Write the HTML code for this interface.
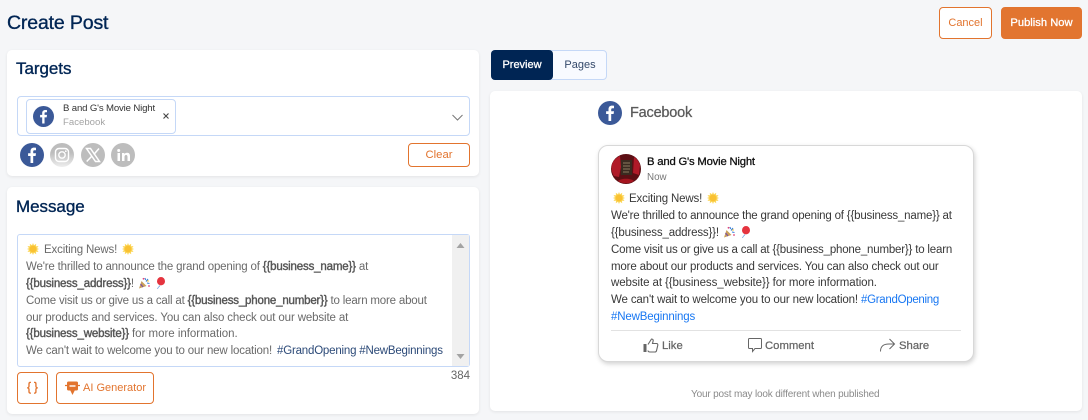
<!DOCTYPE html>
<html><head><meta charset="utf-8">
<style>
html,body{margin:0;padding:0}
body{width:1088px;height:420px;overflow:hidden;position:relative;background:#f5f6f8;font-family:"Liberation Sans",sans-serif}
.a{position:absolute;white-space:nowrap}
.card{position:absolute;background:#fff;border-radius:5px;box-shadow:0 1px 3px rgba(0,0,0,.08)}
.h{color:#002554;-webkit-text-stroke:.35px #002554;font-size:17px;line-height:22px;letter-spacing:-.05px}
.btn{position:absolute;box-sizing:border-box;border:1px solid #e2742e;border-radius:4px;background:#fff;color:#e2742e;font-size:11.5px;display:flex;align-items:center;justify-content:center}
.l{position:absolute;white-space:nowrap;font-size:11.5px;line-height:16px;height:16px;letter-spacing:-.16px}
.m{color:#6a6a6a}
.p{color:#383838}
b{font-weight:normal;-webkit-text-stroke:.4px #555;color:#555}
.tag{color:#2c4a78}
.blue{color:#1877f2}
svg{position:absolute;overflow:visible}
.act{position:absolute;font-size:11.3px;color:#666;-webkit-text-stroke:.25px #666;line-height:16px}
</style></head>
<body>
<svg width="0" height="0" style="position:absolute">
<defs>
<symbol id="fb" viewBox="0 0 24 24"><circle cx="12" cy="12" r="12" fill="#3b5998"/><path d="M13.2 20v-7h2.4l.4-2.8h-2.8V8.500c0-.8.3-1.300 1.400-1.300H16V4.700c-.3 0-1.100-.1-2-.1-2.100 0-3.500 1.300-3.500 3.600v2H8.100V13h2.400v7z" fill="#fff"/></symbol>
<symbol id="star" viewBox="0 0 12 12"><path d="M6 0l1 2.300L9.200.8l-.2 2.400 2.500-.1-1.500 2L12 6l-2 .9 1.500 2-2.500-.1.200 2.400L7 9.700 6 12l-1-2.300-2.200 1.500.2-2.400-2.500.1 1.500-2L0 6l2-.9-1.500-2 2.500.1L2.800.8 5 2.300z" fill="#fcd658"/><circle cx="6" cy="6" r="3.400" fill="#f9c132"/></symbol>
<symbol id="pop" viewBox="0 0 12 12"><path d="M1 11.500L3.500 4l5 5z" fill="#c9a05a"/><path d="M2.500 7l2.500 3" stroke="#7b4fa0" stroke-width="1.200"/><path d="M7 1l.6 2M10 2L8 4.500M11.500 6.500L9 6" stroke="#3b82d8" stroke-width="1.100"/><circle cx="5.500" cy="1.800" r=".9" fill="#e0457b"/><circle cx="11" cy="9" r=".9" fill="#e0457b"/><circle cx="10" cy="4" r=".7" fill="#f4b400"/></symbol>
<symbol id="bal" viewBox="0 0 12 12"><ellipse cx="7" cy="4.200" rx="4" ry="4.200" fill="#e5343f"/><path d="M6 8.500C5 10 4 10 3.500 12" fill="none" stroke="#6f9fe0" stroke-width=".8"/></symbol>
</defs>
</svg>

<div class="a" style="left:7px;top:10px;font-size:19.500px;letter-spacing:-.15px;line-height:26px;color:#002554;-webkit-text-stroke:.35px #002554">Create Post</div>
<div class="btn" style="left:939px;top:7px;width:53px;height:32px;font-size:11px">Cancel</div>
<div class="btn" style="left:1001px;top:7px;width:81px;height:32px;background:#e27530;color:#fff;font-size:11.200px;-webkit-text-stroke:.3px #fff">Publish Now</div>

<!-- Targets -->
<div class="card" style="left:7px;top:50px;width:472px;height:126px"></div>
<div class="a h" style="left:16px;top:58px">Targets</div>
<div class="a" style="left:17px;top:96px;width:453px;height:40px;box-sizing:border-box;border:1px solid #c5d8f7;border-radius:4px"></div>
<div class="a" style="left:26px;top:99px;width:150px;height:35px;box-sizing:border-box;border:1px solid #c5d8f7;border-radius:4px"></div>
<svg style="left:33px;top:106px" width="21" height="21"><use href="#fb" width="21" height="21"/></svg>
<div class="a" style="left:63px;top:103px;font-size:9.600px;letter-spacing:-.15px;line-height:12px;color:#333">B and G's Movie Night</div>
<div class="a" style="left:63px;top:117px;font-size:9.600px;line-height:12px;color:#a5a5a5">Facebook</div>
<svg style="left:163px;top:113px" width="6" height="6"><path d="M.5.500l5 5M5.500.500l-5 5" stroke="#444" stroke-width="1.100"/></svg>
<svg style="left:452px;top:114px" width="11" height="7"><path d="M.5 1l5 5 5-5" fill="none" stroke="#777" stroke-width="1"/></svg>
<svg style="left:20px;top:143px" width="24" height="24"><use href="#fb" width="24" height="24"/></svg>
<svg style="left:50px;top:143px" width="24" height="24" viewBox="0 0 24 24"><defs><linearGradient id="g" x1="0" y1="0" x2="0" y2="1"><stop offset=".4" stop-color="#bdbdbd"/><stop offset="1" stop-color="#eeeeee"/></linearGradient></defs><circle cx="12" cy="12" r="12" fill="url(#g)"/><rect x="5.500" y="5.500" width="13" height="13" rx="3.500" fill="none" stroke="#fff" stroke-width="1.400"/><circle cx="12" cy="12" r="3.200" fill="none" stroke="#fff" stroke-width="1.400"/><circle cx="15.800" cy="8.200" r=".9" fill="#fff"/></svg>
<svg style="left:81px;top:143px" width="24" height="24" viewBox="0 0 24 24"><circle cx="12" cy="12" r="12" fill="#bdbdbd"/><path d="M5.500 5.500h4l9 13h-4z" fill="none" stroke="#fff" stroke-width="1.500"/><path d="M18 5.500l-5.200 6M11 13l-5.300 5.500" stroke="#fff" stroke-width="1.500"/></svg>
<svg style="left:111px;top:143px" width="24" height="24" viewBox="0 0 24 24"><circle cx="12" cy="12" r="12" fill="#bdbdbd"/><rect x="6.500" y="10" width="2.500" height="8" fill="#fff"/><circle cx="7.700" cy="7.500" r="1.500" fill="#fff"/><path d="M11 10h2.400v1.200c.5-.8 1.400-1.400 2.600-1.400 2.300 0 3 1.400 3 3.600V18h-2.500v-4c0-1.100-.3-2-1.400-2-1.200 0-1.600.9-1.600 2v4H11z" fill="#fff"/></svg>
<div class="btn" style="left:408px;top:143px;width:62px;height:24px;font-size:11.300px">Clear</div>

<!-- Message -->
<div class="card" style="left:7px;top:187px;width:472px;height:227px"></div>
<div class="a h" style="left:16px;top:196px">Message</div>
<div class="a" style="left:17px;top:234px;width:453px;height:133px;box-sizing:border-box;border:1px solid #c5d8f7;border-radius:3px"></div>
<div class="a" style="left:452px;top:235px;width:17px;height:131px;background:#f0f0f0"></div>
<svg style="left:456px;top:243px" width="9" height="6"><path d="M4.500 0l4 5h-8z" fill="#a3a3a3"/></svg>
<svg style="left:456px;top:354px" width="9" height="6"><path d="M.5 0h8l-4 5z" fill="#a3a3a3"/></svg>

<svg style="left:27px;top:243px" width="12" height="12"><use href="#star" width="12" height="12"/></svg>
<div class="l m" style="left:44px;top:242px">Exciting News!</div>
<svg style="left:122px;top:243px" width="12" height="12"><use href="#star" width="12" height="12"/></svg>
<div class="l m" style="left:26px;top:259px;letter-spacing:-.17px">We're thrilled to announce the grand opening of <b>{{business_name}}</b> at</div>
<div class="l m" style="left:26px;top:276px"><b>{{business_address}}</b>!</div>
<svg style="left:138px;top:277px" width="12" height="12"><use href="#pop" width="12" height="12"/></svg>
<svg style="left:154px;top:277px" width="12" height="12"><use href="#bal" width="12" height="12"/></svg>
<div class="l m" style="left:26px;top:293px;letter-spacing:-.185px">Come visit us or give us a call at <b>{{business_phone_number}}</b> to learn more about</div>
<div class="l m" style="left:26px;top:310px;letter-spacing:-.13px">our products and services. You can also check out our website at</div>
<div class="l m" style="left:26px;top:326px"><b>{{business_website}}</b> <span style="letter-spacing:-.02px">for more information.</span></div>
<div class="l m" style="left:26px;top:343px">We can't wait to welcome you to our new location! <span class="tag" style="letter-spacing:-.2px;margin-left:2px">#GrandOpening #NewBeginnings</span></div>
<div class="a" style="right:618px;top:369px;font-size:11.500px;line-height:14px;color:#666">384</div>

<div class="btn" style="left:17px;top:372px;width:31px;height:32px;font-size:11.500px;-webkit-text-stroke:.4px #e2742e;letter-spacing:3px;padding-left:3px">{}</div>
<div class="btn" style="left:56px;top:372px;width:98px;height:32px;justify-content:flex-start;padding-left:26px;font-size:11px">AI Generator</div>
<svg style="left:65px;top:381px" width="15" height="14" viewBox="0 0 15 14"><rect x="2" y=".5" width="11" height="9" rx="1.500" fill="#e2742e"/><path d="M0 4.500h15M6 9.500l1.500 3 1.500-3z" stroke="#e2742e" stroke-width="1.300" fill="#e2742e"/><path d="M4.500 5h6" stroke="#fff" stroke-width="1.400"/></svg>

<!-- Right -->
<div class="a" style="left:491px;top:50px;width:116px;height:30px;box-sizing:border-box;border:1px solid #c5d8f7;border-radius:4px;background:#f8faff"></div>
<div class="a" style="left:491px;top:50px;width:62px;height:30px;border-radius:4px;background:#002554;color:#fff;font-size:11px;line-height:30px;text-align:center;-webkit-text-stroke:.3px #fff">Preview</div>
<div class="a" style="left:553px;top:50px;width:54px;height:30px;color:#34496b;font-size:11px;line-height:30px;text-align:center">Pages</div>

<div class="card" style="left:490px;top:91px;width:592px;height:320px"></div>
<svg style="left:598px;top:101px" width="24" height="24"><use href="#fb" width="24" height="24"/></svg>
<div class="a" style="left:630px;top:103px;font-size:14.500px;letter-spacing:-.2px;line-height:20px;color:#5a5a5a;-webkit-text-stroke:.25px #5a5a5a">Facebook</div>

<div class="a" style="left:598px;top:145px;width:376px;height:217px;box-sizing:border-box;border:1px solid #d8d8d8;border-radius:10px;background:#fff;box-shadow:1px 2px 5px rgba(0,0,0,.18)"></div>
<svg style="left:611px;top:154px" width="30" height="30" viewBox="0 0 30 30"><circle cx="15" cy="15" r="15" fill="#5c0f14"/><path d="M1 10a15 15 0 0 1 8-8l1 11-2 10-5-1a15 15 0 0 1-2-12zM23 3a15 15 0 0 1 6 8l-1 10-6-2z" fill="#b01a28"/><rect x="10" y="6" width="11" height="15" fill="#3a2a20"/><path d="M12 9h7M12 12h7M12 15h7M12 18h6" stroke="#8d7a5f" stroke-width="1"/><path d="M7 27c3-3 13-3 16 0a15 15 0 0 1-16 0z" fill="#a5151f"/></svg>
<div class="a" style="left:647px;top:155px;font-size:11.300px;letter-spacing:-.2px;line-height:15px;color:#111;-webkit-text-stroke:.3px #111">B and G's Movie Night</div>
<div class="a" style="left:647px;top:172px;font-size:9.800px;line-height:12px;color:#777">Now</div>

<svg style="left:613px;top:192px" width="12" height="12"><use href="#star" width="12" height="12"/></svg>
<div class="l p" style="left:629px;top:191px">Exciting News!</div>
<svg style="left:707px;top:192px" width="12" height="12"><use href="#star" width="12" height="12"/></svg>
<div class="l p" style="left:611px;top:208px;letter-spacing:-.19px">We're thrilled to announce the grand opening of {{business_name}} at</div>
<div class="l p" style="left:611px;top:225px">{{business_address}}!</div>
<svg style="left:723px;top:226px" width="12" height="12"><use href="#pop" width="12" height="12"/></svg>
<svg style="left:739px;top:226px" width="12" height="12"><use href="#bal" width="12" height="12"/></svg>
<div class="l p" style="left:611px;top:242px;letter-spacing:-.19px">Come visit us or give us a call at {{business_phone_number}} to learn</div>
<div class="l p" style="left:611px;top:259px;letter-spacing:-.145px">more about our products and services. You can also check out our</div>
<div class="l p" style="left:611px;top:275px;letter-spacing:-.085px">website at {{business_website}} for more information.</div>
<div class="l p" style="left:611px;top:292px;letter-spacing:-.14px">We can't wait to welcome you to our new location! <span class="blue" style="letter-spacing:-.3px">#GrandOpening</span></div>
<div class="l blue" style="left:611px;top:309px">#NewBeginnings</div>
<div class="a" style="left:611px;top:330px;width:350px;height:1px;background:#e2e2e2"></div>

<svg style="left:643px;top:338px" width="16" height="15" viewBox="0 0 16 15"><rect x=".5" y="6" width="3" height="8" fill="#666"/><path d="M5 6.500L8.500 1c1.500 0 2 1 1.500 2.500L9.500 5.500h4c1 0 1.500.8 1.300 1.700l-1.300 5.500c-.2.800-.8 1.300-1.600 1.300H7c-1 0-2-.5-2-1.500" fill="none" stroke="#666" stroke-width="1.100"/></svg>
<div class="act" style="left:662px;top:338px">Like</div>
<svg style="left:748px;top:338px" width="14" height="14" viewBox="0 0 14 14"><path d="M1.500.5h11c.6 0 1 .4 1 1v8c0 .6-.4 1-1 1H7l-2.500 3v-3h-3c-.6 0-1-.4-1-1v-8c0-.6.4-1 1-1z" fill="none" stroke="#666" stroke-width="1"/></svg>
<div class="act" style="left:765px;top:338px">Comment</div>
<svg style="left:880px;top:338px" width="15" height="14" viewBox="0 0 15 14"><path d="M.5 13.500C.5 8 3.500 6 9 6h5M9.500 1l5 5-5 5" fill="none" stroke="#666" stroke-width="1"/></svg>
<div class="act" style="left:899px;top:338px">Share</div>

<div class="a" style="left:691px;top:388px;font-size:10px;letter-spacing:-.17px;line-height:13px;color:#8a8a8a">Your post may look different when published</div>
</body></html>
